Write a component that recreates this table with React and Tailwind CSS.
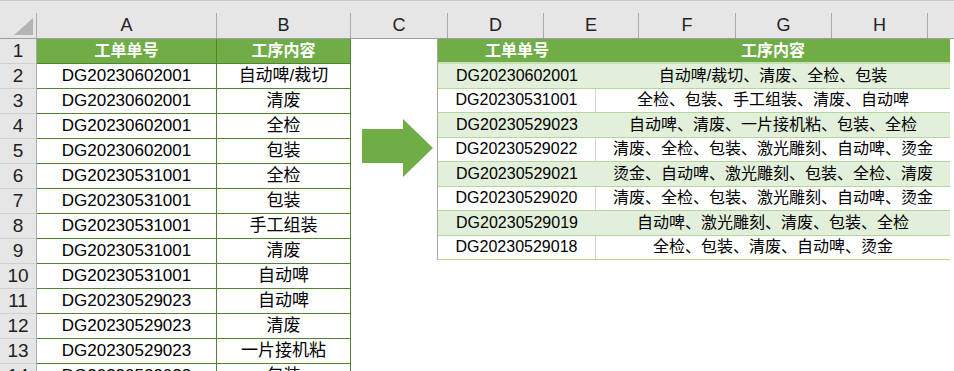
import React from 'react';

const cols = [
  { label: 'A', w: 'w-[180px]' },
  { label: 'B', w: 'w-[134px]' },
  { label: 'C', w: 'w-[97px]' },
  { label: 'D', w: 'w-[96px]' },
  { label: 'E', w: 'w-[95px]' },
  { label: 'F', w: 'w-[97px]' },
  { label: 'G', w: 'w-[96px]' },
  { label: 'H', w: 'w-[96px]' },
];

const leftRows = [
  ['DG20230602001', '自动啤/裁切'],
  ['DG20230602001', '清废'],
  ['DG20230602001', '全检'],
  ['DG20230602001', '包装'],
  ['DG20230531001', '全检'],
  ['DG20230531001', '包装'],
  ['DG20230531001', '手工组装'],
  ['DG20230531001', '清废'],
  ['DG20230531001', '自动啤'],
  ['DG20230529023', '自动啤'],
  ['DG20230529023', '清废'],
  ['DG20230529023', '一片接机粘'],
  ['DG20230529023', '包装'],
];

const rightRows = [
  ['DG20230602001', '自动啤/裁切、清废、全检、包装'],
  ['DG20230531001', '全检、包装、手工组装、清废、自动啤'],
  ['DG20230529023', '自动啤、清废、一片接机粘、包装、全检'],
  ['DG20230529022', '清废、全检、包装、激光雕刻、自动啤、烫金'],
  ['DG20230529021', '烫金、自动啤、激光雕刻、包装、全检、清废'],
  ['DG20230529020', '清废、全检、包装、激光雕刻、自动啤、烫金'],
  ['DG20230529019', '自动啤、激光雕刻、清废、包装、全检'],
  ['DG20230529018', '全检、包装、清废、自动啤、烫金'],
];

function ColumnHeader() {
  return (
    <div className="flex items-end h-[39px] bg-[#e6e6e6] border-t border-[#c8c8c8] border-b border-b-[#9e9e9e]">
      <div className="w-[37px] h-[25px] shrink-0 border-r border-[#ababab] flex items-end justify-end pr-[3px] pb-[3px]">
        <svg width="19" height="17" viewBox="0 0 19 17">
          <polygon points="19,0 19,17 0,17" fill="#b4b4b4" />
        </svg>
      </div>
      {cols.map((c) => (
        <div
          key={c.label}
          className={`${c.w} shrink-0 h-[25px] border-r border-[#ababab] flex items-center justify-center text-[18px] text-[#222]`}
        >
          {c.label}
        </div>
      ))}
      <div className="flex-1 h-[25px]" />
    </div>
  );
}

export default function App() {
  return (
    <div className="w-[954px] h-[371px] overflow-hidden bg-white font-['Liberation_Sans','Noto_Sans_CJK_SC',sans-serif] text-black">
      <ColumnHeader />
      <div className="flex items-start">
        {/* row numbers */}
        <div className="w-[37px] shrink-0 bg-[#e6e6e6] border-r border-[#ababab]">
          {Array.from({ length: 14 }, (_, i) => (
            <div
              key={i}
              className="h-[25px] border-b border-[#d0d0d0] flex items-center justify-center text-[19px] text-[#222]"
            >
              {i + 1}
            </div>
          ))}
        </div>

        {/* source table */}
        <div className="w-[314px] shrink-0 border-r border-[#548235]">
          <div className="flex h-[25px] bg-[#70ad47] border-b border-[#548235] text-white font-bold text-[16px]">
            <div className="w-[180px] border-r border-[#548235] flex items-center justify-center">工单单号</div>
            <div className="flex-1 flex items-center justify-center">工序内容</div>
          </div>
          {leftRows.map((r, i) => (
            <div key={i} className="flex h-[25px] border-b border-[#548235] text-[17px]">
              <div className="w-[180px] border-r border-[#548235] flex items-center justify-center">{r[0]}</div>
              <div className="flex-1 flex items-center justify-center">{r[1]}</div>
            </div>
          ))}
        </div>

        {/* arrow */}
        <div className="w-[86px] shrink-0 flex justify-end pr-[4px] pt-[80px]">
          <svg width="71" height="58" viewBox="0 0 71 58">
            <polygon points="0,10 41,10 41,0 71,29 41,58 41,44 0,44" fill="#70ad47" />
          </svg>
        </div>

        {/* result table */}
        <div className="w-[513px] shrink-0 border-l border-[#a6a6a6] text-[16px]">
          <div className="flex h-[25px] bg-[#70ad47] border-b-2 border-[#c6e0b4] text-white font-bold">
            <div className="w-[158px] flex items-center justify-center">工单单号</div>
            <div className="flex-1 flex items-center justify-center">工序内容</div>
          </div>
          {rightRows.map((r, i) => (
            <div
              key={i}
              className={`flex h-[24.5px] border-b border-[#b4d89a] ${i % 2 === 0 ? 'bg-[#e2efda]' : 'bg-white'}`}
            >
              <div
                className={`w-[158px] flex items-center justify-center ${i % 2 === 0 ? '' : 'border-r border-[#d4d4d4]'}`}
              >
                {r[0]}
              </div>
              <div className="flex-1 flex items-center justify-center">{r[1]}</div>
            </div>
          ))}
        </div>
      </div>
    </div>
  );
}
